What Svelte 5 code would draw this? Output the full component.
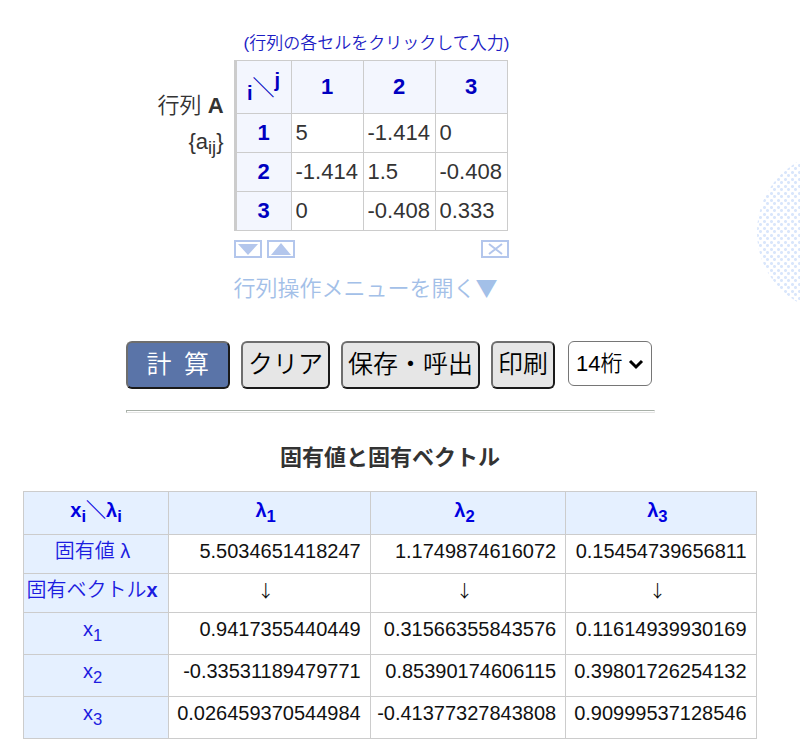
<script lang="ts">
  let matrix = $state([
    ['5', '-1.414', '0'],
    ['-1.414', '1.5', '-0.408'],
    ['0', '-0.408', '0.333']
  ])
  let digits = $state('14')

  const eigenvalues = ['5.5034651418247', '1.1749874616072', '0.15454739656811']
  const eigenvectors = [
    ['0.9417355440449', '0.31566355843576', '0.11614939930169'],
    ['-0.33531189479771', '0.85390174606115', '0.39801726254132'],
    ['0.026459370544984', '-0.41377327843808', '0.90999537128546']
  ]

  function clearMatrix(): void {
    matrix = matrix.map((row) => row.map(() => ''))
  }
</script>

<div class="page">
  <div class="halftone" aria-hidden="true"></div>

  <main>
    <form class="calc" onsubmit={(e) => e.preventDefault()}>
      <div class="entry">
        <div class="name">
          <div>行列 <b>A</b></div>
          <div>&#123;a<sub>ij</sub>&#125;</div>
        </div>
        <div class="field">
          <p class="hint">(行列の各セルをクリックして入力)</p>
          <table class="matrix">
            <thead>
              <tr>
                <th class="corner"><sub>i</sub>＼<sup>j</sup></th>
                {#each matrix[0] as _, j}
                  <th scope="col">{j + 1}</th>
                {/each}
              </tr>
            </thead>
            <tbody>
              {#each matrix as row, i}
                <tr>
                  <th scope="row">{i + 1}</th>
                  {#each row as _, j}
                    <td><input aria-label="a{i + 1}{j + 1}" bind:value={matrix[i][j]} /></td>
                  {/each}
                </tr>
              {/each}
            </tbody>
          </table>
          <div class="tools">
            <button type="button" class="tool" aria-label="行を増やす">
              <svg width="28" height="18" viewBox="0 0 28 18"><path d="M4 4h20l-10 11z" fill="#b3c6ec" /></svg>
            </button>
            <button type="button" class="tool" aria-label="行を減らす">
              <svg width="28" height="18" viewBox="0 0 28 18"><path d="M4 15h20l-10 -12z" fill="#b3c6ec" /></svg>
            </button>
            <button type="button" class="tool close" aria-label="消去" onclick={clearMatrix}>
              <svg width="28" height="18" viewBox="0 0 28 18">
                <path d="M8 4l13 10M21 4l-13 10" stroke="#b3c6ec" stroke-width="2" />
              </svg>
            </button>
          </div>
          <button type="button" class="menu">行列操作メニューを開く▼</button>
        </div>
      </div>

      <div class="actions">
        <button class="btn primary">計&ensp;算</button>
        <button type="button" class="btn" onclick={clearMatrix}>クリア</button>
        <button type="button" class="btn">保存・呼出</button>
        <button type="button" class="btn">印刷</button>
        <div class="digits">
          <select aria-label="桁数" bind:value={digits}>
            <option value="6">6桁</option>
            <option value="10">10桁</option>
            <option value="14">14桁</option>
            <option value="18">18桁</option>
          </select>
          <svg width="16" height="12" viewBox="0 0 16 12" aria-hidden="true">
            <path d="M2 3l6 6 6-6" fill="none" stroke="#000" stroke-width="3" />
          </svg>
        </div>
      </div>
      <hr />
    </form>

    <h2>固有値と固有ベクトル</h2>

    <table class="result">
      <colgroup>
        <col class="c-label" />
        <col class="c-first" />
        <col class="c-second" />
        <col />
      </colgroup>
      <thead>
        <tr>
          <th class="corner">x<sub>i</sub>＼λ<sub>i</sub></th>
          {#each eigenvalues as _, i}
            <th scope="col">λ<sub>{i + 1}</sub></th>
          {/each}
        </tr>
      </thead>
      <tbody>
        <tr class="short">
          <th scope="row">固有値 λ</th>
          {#each eigenvalues as value}
            <td>{value}</td>
          {/each}
        </tr>
        <tr class="short">
          <th scope="row" class="vector">固有ベクトル<b>x</b></th>
          {#each eigenvalues as _}
            <td class="arrow">↓</td>
          {/each}
        </tr>
        {#each eigenvectors as row, i}
          <tr>
            <th scope="row">x<sub>{i + 1}</sub></th>
            {#each row as value}
              <td>{value}</td>
            {/each}
          </tr>
        {/each}
      </tbody>
    </table>
  </main>
</div>

<style>
  :global(body) {
    margin: 0;
    background: #fff;
  }

  .page {
    position: relative;
    overflow: hidden;
    box-sizing: border-box;
    min-height: 100vh;
    padding: 32px 20px 12px 0;
    font-family: 'Liberation Sans', 'Noto Sans CJK JP', sans-serif;
    font-size: 22px;
    font-weight: 350;
    color: #333;
  }

  /* decorative dotted disc running off the right edge */
  .halftone {
    position: absolute;
    top: 151px;
    right: -119px;
    width: 162px;
    height: 162px;
    border-radius: 50%;
    background-image: radial-gradient(circle, #d9e6fb 1px, transparent 2px),
      radial-gradient(circle, #d9e6fb 1px, transparent 2px);
    background-size: 7px 7px;
    background-position:
      0 0,
      4px 4px;
  }

  main {
    position: relative;
  }

  button,
  input,
  select {
    font-family: inherit;
    font-weight: inherit;
  }

  b {
    font-weight: bold;
  }

  table {
    border-collapse: collapse;
  }

  sub,
  sup {
    line-height: 0;
  }

  .calc {
    max-width: 529px;
    margin: 0 auto;
  }

  .entry {
    display: flex;
    gap: 10px;
    padding-left: 32px;
  }

  .name {
    padding-top: 56px;
    line-height: 36px;
    text-align: right;
  }

  .hint {
    margin: 0 0 4px;
    padding-left: 10px;
    font-size: 17px;
    line-height: 24px;
    color: #1c1cc4;
  }

  .matrix {
    border: 1px solid #ccc;
    border-left: 3px solid #ccc;
  }

  .matrix th,
  .matrix td {
    padding: 0;
    border: 1px solid #ccc;
  }

  .matrix th {
    min-width: 54px;
    background: #f3f6fe;
    color: #0000c0;
    font-weight: bold;
  }

  .matrix thead th {
    height: 52px;
  }

  .matrix thead .corner {
    height: 48px;
    padding-bottom: 4px;
    font-weight: 400;
  }

  .matrix .corner sub,
  .matrix .corner sup {
    font-size: 20px;
    font-weight: bold;
  }

  .matrix input {
    display: block;
    box-sizing: border-box;
    width: 71px;
    height: 38px;
    padding: 0 0 0 4px;
    border: 0;
    background: #fff;
    color: #333;
    font-size: 22px;
  }

  .tools {
    display: flex;
    gap: 5px;
    padding-top: 9px;
  }

  .tool {
    padding: 0;
    border: 2px solid #b3c6ec;
    background: #fff;
    line-height: 0;
    cursor: pointer;
  }

  .tool svg {
    margin: -2px;
  }

  .tool.close {
    margin-left: auto;
  }

  .menu {
    display: block;
    margin-top: 12px;
    padding: 0;
    border: 0;
    background: none;
    color: #a3c0e8;
    font-family: 'Noto Sans CJK JP', sans-serif;
    font-size: 22px;
    line-height: 32px;
    white-space: nowrap;
    cursor: pointer;
  }

  .actions {
    display: flex;
    align-items: flex-start;
    gap: 11px;
    margin-top: 39px;
  }

  .btn {
    height: 48px;
    padding: 0 5px 2px;
    border: 2px solid;
    border-color: #6e6e6e #1a1a1a #1a1a1a #6e6e6e;
    border-radius: 6px;
    background: #e6e6e6;
    color: #000;
    font-size: 25px;
    line-height: 40px;
    white-space: nowrap;
    cursor: pointer;
  }

  .btn.primary {
    padding: 0 19px 2px;
    background: #5a74a8;
    color: #fff;
  }

  .digits {
    position: relative;
    margin-left: 2px;
  }

  .digits select {
    appearance: none;
    height: 45px;
    padding: 0 28px 0 7px;
    border: 1px solid #767676;
    border-radius: 6px;
    background: #fff;
    color: #000;
    font-size: 22px;
  }

  .digits svg {
    position: absolute;
    top: 17px;
    right: 8px;
    pointer-events: none;
  }

  hr {
    height: 1px;
    margin: 21px 0 0;
    border: 1px solid;
    border-color: #a8b0a8 #eee #e4e4e4 #a8b0a8;
  }

  h2 {
    margin: 28px 0 16px;
    font-size: 22px;
    line-height: 34px;
    text-align: center;
  }

  .result {
    width: 94%;
    margin: 0 auto;
    table-layout: fixed;
    font-size: 20px;
    line-height: 24px;
    color: #111;
  }

  .c-label {
    width: 19.7%;
  }

  .c-first {
    width: 27.6%;
  }

  .c-second {
    width: 26.7%;
  }

  .result th,
  .result td {
    height: 32px;
    padding: 0 9px 9px 2px;
    border: 1px solid #ccc;
    white-space: nowrap;
  }

  .result .short th,
  .result .short td {
    height: 31px;
    padding-bottom: 7px;
  }

  .result th {
    background: #e5f0ff;
    color: #1c1ce0;
    font-weight: 350;
  }

  .result thead th {
    height: 35px;
    padding-bottom: 7px;
    color: #0000e0;
    font-weight: bold;
  }

  .result thead .corner {
    padding-right: 2px;
  }

  .result td {
    text-align: right;
  }

  .result .vector {
    text-align: left;
  }

  .result .arrow {
    padding-bottom: 3px;
    font-family: 'Noto Sans CJK JP', sans-serif;
    font-size: 17px;
    text-align: center;
  }
</style>
